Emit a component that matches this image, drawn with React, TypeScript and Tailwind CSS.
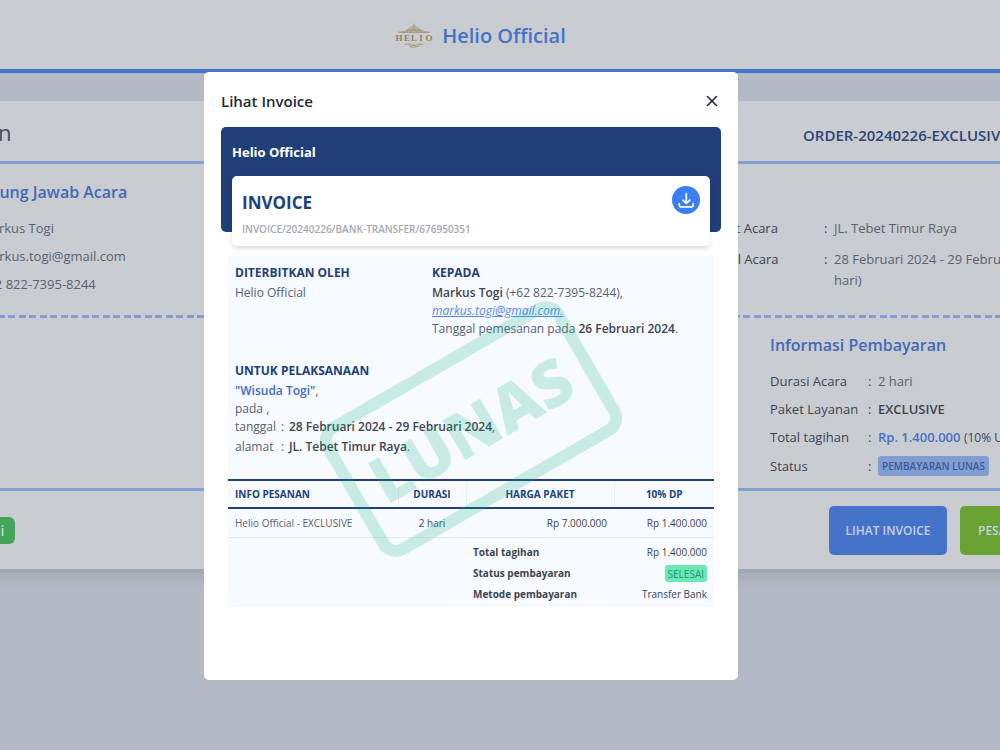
import React from "react";

function Logo() {
  return (
    <svg width="40" height="28" viewBox="0 0 40 28" aria-label="Helio" role="img">
      <g fill="none" stroke="#a2946f" strokeWidth="0.8" strokeLinecap="round">
        <path d="M20 2v3M17.500 5c1-2 4-2 5 0M20 5c-3 0-4 3-7 4M20 5c3 0 4 3 7 4" />
        <path d="M5 10c6 0 8-2 11-4M35 10c-6 0-8-2-11-4M9 10.500c4-1 7-1 11-4 4 3 7 3 11 4" />
        <path d="M16 10c0-4 8-4 8 0M18 10c0-3 4-3 4 0M13 10c1-3 3-3 4 0M23 10c1-3 3-3 4 0M17 8h6M15 9h10M5 10.500h30" />
        <path d="M11 22.500c3-1 5-1 7 .5 1 1 3 1 4 0 2-1.500 4-1.500 7-.5M14 22.500c1 2 4 3 6 0 2 3 5 2 6 0M16 24.500c2 1 6 1 8 0" />
      </g>
      <g fill="#958257" fontFamily="'Liberation Serif', serif" fontWeight="700" fontSize="9" textAnchor="middle">
        <text x="5" y="19">H</text>
        <text x="13" y="19">E</text>
        <text x="20" y="19">L</text>
        <text x="27" y="19">I</text>
        <text x="35" y="19">O</text>
      </g>
    </svg>
  );
}

const labelWidths = {
  short: "w-[37px] shrink-0",
  normal: "w-[98px] shrink-0",
  wide: "w-[130px] shrink-0",
};

function Info({ label, children, size = "normal" }: { label: string; children: React.ReactNode; size?: keyof typeof labelWidths }) {
  return (
    <div className="flex">
      <dt className={labelWidths[size]}>{label}</dt>
      <span className="w-[10px] shrink-0">:</span>
      <dd className="whitespace-nowrap text-[#5b6270]">{children}</dd>
    </div>
  );
}

function OrderPage() {
  return (
    <div className="min-h-screen bg-[#b3bac5]">
      <header className="flex h-[73px] items-center justify-center gap-2 border-b-4 border-[#4573c9] bg-[#c9ccd1] pt-[2px] pr-[40px]">
        <Logo />
        <h1 className="text-[20px] leading-7 font-semibold text-[#4573c9]">Helio Official</h1>
      </header>
      <main className="mt-[28px] -mr-32 -ml-32 bg-[#c9ccd1] text-[13px] text-[#3d4453] shadow-lg">
        <div className="grid grid-cols-[1fr_325px] items-center border-b-[3px] border-[#849fd3] pt-[6px]">
          <h2 className="pb-1 pl-[6px] text-[22px] leading-[50px] text-[#474d59]">Info Pesanan</h2>
          <p className="pt-[2px] text-[15px] font-semibold whitespace-nowrap text-[#2c4675]">ORDER-20240226-EXCLUSIVE</p>
        </div>
        <div className="flex justify-between pr-8 pl-[61px]">
          <section className="pt-4 pb-5">
            <h3 className="mb-[14px] text-[16px] leading-6 font-semibold whitespace-nowrap text-[#446ab5]">Penanggung Jawab Acara</h3>
            <dl className="flex flex-col gap-2 leading-5">
              <Info label="Nama" size="short">Markus Togi</Info>
              <Info label="Email" size="short">markus.togi@gmail.com</Info>
              <Info label="Telp" size="short">+62 822-7395-8244</Info>
            </dl>
          </section>
          <section className="w-[402px] pt-[54px] pb-6">
            <dl className="flex flex-col gap-[10px] leading-[21px]">
              <Info label="Tempat Acara" size="wide">JL. Tebet Timur Raya</Info>
              <Info label="Tanggal Acara" size="wide">
                28 Februari 2024 - 29 Februari 2024 (2<br />hari)
              </Info>
            </dl>
          </section>
        </div>
        <div className="h-[3px] bg-[repeating-linear-gradient(90deg,#849fd3_0_7px,transparent_7px_10px,#849fd3_10px_17px,transparent_17px_21px)]" />
        <section className="flex justify-end border-b-[3px] border-[#849fd3] pt-[15px] pb-3">
          <div className="w-[358px]">
            <h3 className="mb-[14px] text-[16px] leading-6 font-semibold text-[#446ab5]">Informasi Pembayaran</h3>
            <dl className="flex flex-col gap-2 leading-5">
              <Info label="Durasi Acara">2 hari</Info>
              <Info label="Paket Layanan"><b className="font-semibold text-[#3d4453]">EXCLUSIVE</b></Info>
              <Info label="Total tagihan">
                <b className="font-semibold text-[#4573c9]">Rp. 1.400.000</b> <span className="text-[12px] text-[#3d4453]">(10% Uang Muka)</span>
              </Info>
              <Info label="Status">
                <span className="block rounded-[3px] bg-[#829dd2] px-1 text-[10px] font-semibold text-[#3a5a99]">PEMBAYARAN LUNAS</span>
              </Info>
            </dl>
          </div>
        </section>
        <div className="flex items-center justify-between pt-[15px] pb-[14px] pl-[38px]">
          <span className="rounded-[6px] bg-[#44a45a] px-[11px] text-[14px] leading-[27px] font-semibold text-[#c9d5cf]">Terverifikasi</span>
          <div className="flex w-[299px] gap-[13px] text-[12px] font-semibold text-[#c5cfe2]">
            <button className="w-[118px] shrink-0 rounded-[5px] bg-[#4573c9] pt-px leading-[48px]">LIHAT INVOICE</button>
            <button className="shrink-0 rounded-[5px] bg-[#68a333] px-[18px] pt-px leading-[48px]">PESAN LAGI</button>
          </div>
        </div>
      </main>
    </div>
  );
}

function InvoiceTable() {
  return (
    <table className="w-full table-fixed border-collapse text-[10px] text-[#3d4452]">
      <colgroup>
        <col className="w-[170px]" />
        <col className="w-[68px]" />
        <col />
        <col className="w-[100px]" />
      </colgroup>
      <thead className="border-y-2 border-[#203f7b] leading-[26px] text-[#203f7b]">
        <tr className="divide-x divide-[#e9eef5]">
          <th className="px-[7px] text-left">INFO PESANAN</th>
          <th>DURASI</th>
          <th>HARGA PAKET</th>
          <th>10% DP</th>
        </tr>
      </thead>
      <tbody>
        <tr className="border-b border-[#e6ebf2] leading-7">
          <td className="px-[7px] text-[#596070]">Helio Official - EXCLUSIVE</td>
          <td className="text-center">2 hari</td>
          <td className="px-[7px] text-right font-medium">Rp 7.000.000</td>
          <td className="px-[7px] text-right font-medium">Rp 1.400.000</td>
        </tr>
      </tbody>
    </table>
  );
}

function Total({ label, children }: { label: string; children: React.ReactNode }) {
  return (
    <div className="flex items-center justify-between leading-5">
      <dt className="font-bold">{label}</dt>
      <dd className="font-medium">{children}</dd>
    </div>
  );
}

function InvoiceDialog() {
  return (
    <div className="fixed inset-0 flex items-center justify-center pt-[2px] pr-[58px]">
      <div role="dialog" aria-labelledby="invoice-title" className="w-full max-w-[534px] rounded-[5px] bg-white px-[17px] pt-[17px] pb-[73px]">
        <div className="flex items-center justify-between leading-6">
          <h2 id="invoice-title" className="text-[15px] font-semibold text-[#1f2937]">Lihat Invoice</h2>
          <button aria-label="Tutup" className="pr-[3px] text-[#1f2937]">
            <svg width="12" height="12" viewBox="0 0 12 12" fill="none" stroke="currentColor" strokeWidth="1.6" strokeLinecap="round">
              <path d="M1.5 1.5l9 9M10.5 1.5l-9 9" />
            </svg>
          </button>
        </div>
        <div className="mt-[14px] h-[105px] rounded-[5px] bg-[#203f78] px-[11px] pt-4">
          <p className="text-[13px] leading-[18px] font-bold text-white">Helio Official</p>
          <div className="mt-[15px] flex items-start justify-between rounded-[5px] bg-white px-[10px] pt-[10px] pb-2 shadow-md">
            <div>
              <h3 className="text-[17px] leading-[34px] font-bold text-[#203f7b]">INVOICE</h3>
              <p className="text-[10px] leading-[18px] font-semibold text-[#a3a7b1]">INVOICE/20240226/BANK-TRANSFER/676950351</p>
            </div>
            <button aria-label="Unduh invoice" className="flex size-7 items-center justify-center rounded-full bg-[#3b7ff3] text-white">
              <svg width="16" height="16" viewBox="0 0 16 16" fill="none" stroke="currentColor" strokeWidth="1.7" strokeLinecap="round" strokeLinejoin="round">
                <path d="M8.300 1.500v9.500M4.800 8.200l3.500 3.300 3.500-3.300M1.300 11.700v1.800c0 .9.400 1.300 1.300 1.300h11.200c.9 0 1.300-.4 1.300-1.300v-1.800" />
              </svg>
            </button>
          </div>
        </div>
        <div className="relative mx-[7px] mt-6 bg-[#f7faff] pb-[3px] text-[12px] leading-[18px] text-[#596070]">
          <div className="grid grid-cols-[197px_1fr] px-[7px] pt-2">
            <div>
              <h4 className="mb-[2px] font-bold text-[#203f7b]">DITERBITKAN OLEH</h4>
              <p>Helio Official</p>
            </div>
            <div>
              <h4 className="mb-[2px] font-bold text-[#203f7b]">KEPADA</h4>
              <p><b className="font-semibold text-[#3d4452]">Markus Togi</b> (+62 822-7395-8244),</p>
              <p><a href="mailto:markus.togi@gmail.com" className="text-[#4f86f0] italic underline">markus.togi@gmail.com.</a></p>
              <p>Tanggal pemesanan pada <b className="font-semibold text-[#3d4452]">26 Februari 2024</b>.</p>
            </div>
          </div>
          <div className="px-[7px] pt-6 pb-[23px]">
            <h4 className="mb-[2px] font-bold text-[#203f7b]">UNTUK PELAKSANAAN</h4>
            <p><b className="font-semibold text-[#4069c8]">"Wisuda Togi"</b>,</p>
            <p>pada ,</p>
            <p className="flex"><span className="w-[46px]">tanggal</span><span className="w-2">:</span><b className="font-semibold text-[#3d4452]">28 Februari 2024 - 29 Februari 2024</b>,</p>
            <p className="mt-[2px] flex"><span className="w-[46px]">alamat</span><span className="w-2">:</span><b className="font-semibold text-[#3d4452]">JL. Tebet Timur Raya</b>.</p>
          </div>
          <InvoiceTable />
          <dl className="ml-auto flex w-[241px] flex-col gap-px pt-1 pr-[7px] text-[10px] text-[#3d4452]">
            <Total label="Total tagihan">Rp 1.400.000</Total>
            <Total label="Status pembayaran">
              <span className="block rounded-[3px] bg-[#6ee7b7] px-[3px] pt-px text-[10px] leading-4 text-[#159a72]">SELESAI</span>
            </Total>
            <Total label="Metode pembayaran">Transfer Bank</Total>
          </dl>
          <div className="pointer-events-none absolute inset-x-0 top-[97px] flex justify-center">
            <div className="flex h-[152px] w-[278px] -rotate-30 items-center justify-center rounded-[20px] border-[12px] border-[#10b981] text-[64px] font-extrabold text-[#10b981] opacity-20">
              LUNAS
            </div>
          </div>
        </div>
      </div>
    </div>
  );
}

export default function App() {
  return (
    <div className="overflow-hidden font-['Open_Sans',sans-serif]">
      <OrderPage />
      <InvoiceDialog />
    </div>
  );
}
